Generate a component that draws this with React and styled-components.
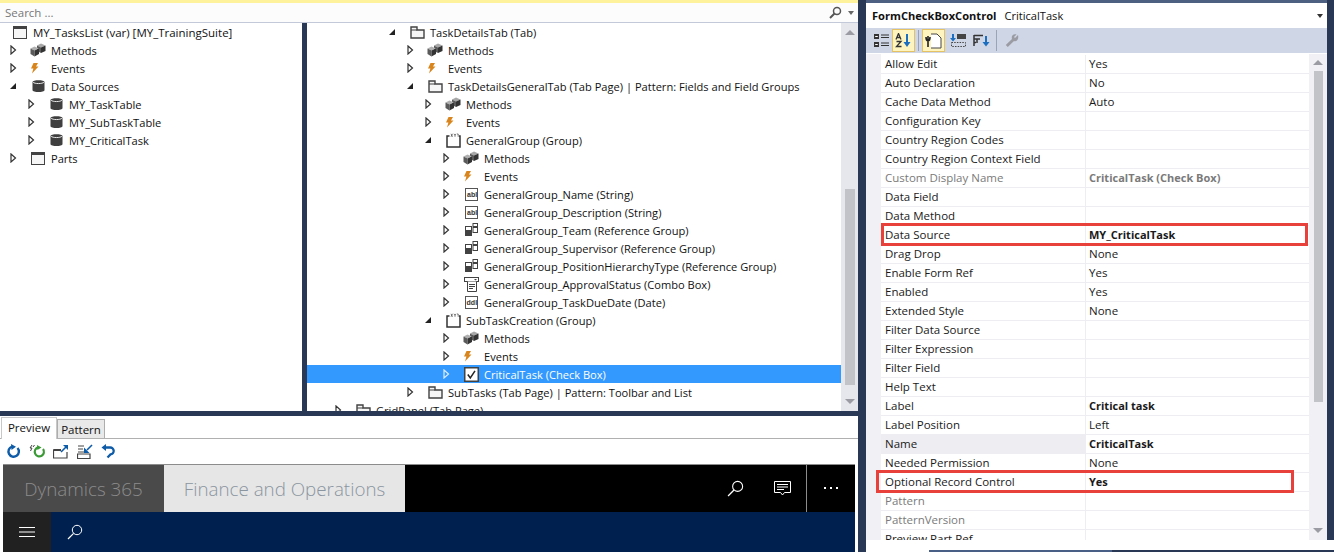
import styled, { createGlobalStyle } from "styled-components";

const GlobalStyle = createGlobalStyle`
    html, body { margin: 0; padding: 0; background: #293955; overflow: hidden; }
    * { box-sizing: border-box; }
`

const UI_FONT = `"Open Sans", "Noto Sans", sans-serif`

const Screen = styled.div`
    display: flex;
    width: 1334px;
    height: 552px;
    background: #293955;
    font-family: ${UI_FONT};
    font-size: 11.5px;
    color: #111;
    overflow: hidden;
`

const Designer = styled.div`
    display: flex;
    flex-direction: column;
    width: 858px;
    flex: none;
`

const TopStrip = styled.div`
    height: 3px;
    background: #fff29d;
`

const SearchBar = styled.div`
    display: flex;
    align-items: center;
    justify-content: space-between;
    height: 20px;
    padding: 0 4px 0 5px;
    background: #fcfcfc;
    border-bottom: 1px solid #c3c9d8;
    color: #777;
`

const SearchTools = styled.div`
    display: flex;
    align-items: center;
    gap: 6px;
`

const Trees = styled.div`
    display: flex;
    height: 388px;
    flex: none;
`

const LeftTree = styled.div`
    width: 302px;
    background: #fff;
    overflow: hidden;
`

const VSplit = styled.div`
    width: 5px;
    background: #293955;
`

const RightTree = styled.div`
    display: flex;
    width: 551px;
    background: #fff;
`

const TreeBody = styled.div`
    width: 534px;
    overflow: hidden;
`

const TreeRow = styled.div`
    display: flex;
    align-items: center;
    height: 18px;
    padding-left: ${p => p.$indent}px;
    background: ${p => (p.$selected ? "#3399ff" : "transparent")};
    color: ${p => (p.$selected ? "#fff" : "inherit")};
    font-size: 11.1px;
    white-space: nowrap;
`

const Toggle = styled.span`
    display: flex;
    justify-content: center;
    width: 18px;
    flex: none;
`

const NodeIcon = styled.span`
    display: flex;
    justify-content: center;
    width: 18px;
    margin: 0 4px 0 7px;
    flex: none;
`

const RootRow = styled(TreeRow)`
    font-size: 11.5px;
`

const RootIcon = styled(NodeIcon)`
    margin-left: 0;
`

const TreeScroll = styled.div`
    display: flex;
    flex-direction: column;
    align-items: center;
    width: 17px;
    background: #e6e7ec;
    padding-top: 7px;
`

const TreeThumb = styled.div`
    width: 10px;
    height: 196px;
    margin-top: 154px;
    background: #c2c3c9;
`

const ScrollArrow = styled.span`
    margin-top: ${p => p.$gap}px;
    width: 0;
    height: 0;
    flex: none;
    border-left: 5px solid transparent;
    border-right: 5px solid transparent;
    ${p => (p.$up ? "border-bottom" : "border-top")}: 5px solid #9a9ba3;
`

const HSplit = styled.div`
    height: 5px;
    background: #293955;
    flex: none;
`

const PreviewPane = styled.div`
    display: flex;
    flex-direction: column;
    flex: 1;
    background: #fff;
`

const TabStrip = styled.div`
    display: flex;
    align-items: flex-end;
    height: 23px;
    padding: 1px 0 0 1px;
    border-bottom: 1px solid #b0b0b0;
`

const Tab = styled.div`
    display: flex;
    align-items: center;
    justify-content: center;
    width: ${p => p.$width}px;
    height: ${p => (p.$active ? 22 : 19)}px;
    margin-bottom: ${p => (p.$active ? -1 : 0)}px;
    padding-bottom: ${p => (p.$active ? 2 : 0)}px;
    background: ${p => (p.$active ? "#fff" : "#e9e9e9")};
    border: 1px solid ${p => (p.$active ? "#c8c8c8" : "#adadad")};
    border-bottom: none;
    color: #111;
`

const PreviewTools = styled.div`
    display: flex;
    align-items: center;
    gap: 7.5px;
    height: 25px;
    padding-left: 6px;
`

const AppFrame = styled.div`
    display: flex;
    flex-direction: column;
    flex: 1;
    margin: 0 3px;
`

const AppHeader = styled.div`
    display: flex;
    height: 48px;
    background: #000;
    border-top: 1px solid #8c8c8c;
`

const AppBrand = styled.div`
    display: flex;
    align-items: center;
    justify-content: center;
    width: ${p => p.$width}px;
    background: ${p => p.$bg};
    color: ${p => p.$color};
    font-size: 18.8px;
    font-weight: 300;
    white-space: nowrap;
`

const AppActions = styled.div`
    display: flex;
    flex: 1;
    justify-content: flex-end;
    align-items: stretch;
`

const AppAction = styled.div`
    display: flex;
    align-items: center;
    justify-content: center;
    width: ${p => p.$width}px;
    border-left: ${p => (p.$divided ? "1px solid #8c8c8c" : "none")};
`

const AppNav = styled.div`
    display: flex;
    align-items: center;
    flex: 1;
    background: #002050;
`

const Burger = styled.div`
    display: flex;
    align-items: center;
    justify-content: center;
    width: 48px;
    height: 100%;
    background: #212121;
`

const NavSearch = styled.div`
    display: flex;
    padding-left: 16px;
`

const PropertiesSide = styled.div`
    display: flex;
    flex-direction: column;
    width: 468px;
    margin-left: 8px;
    flex: none;
`

const PropertiesArea = styled.div`
    display: flex;
    height: 540px;
    flex: none;
`

const Properties = styled.div`
    display: flex;
    flex-direction: column;
    width: 461px;
    background: #fff;
`

const PropTopEdge = styled.div`
    height: 3px;
    background: #4d6082;
    flex: none;
`

const PropTitle = styled.div`
    display: flex;
    align-items: center;
    justify-content: space-between;
    height: 25px;
    padding: 0 4px 0 6px;
    background: #fff;
    font-size: 11.1px;
`

const TitleName = styled.b`
    font-weight: 700;
    margin-right: 8px;
`

const PropToolbar = styled.div`
    display: flex;
    align-items: center;
    height: 25px;
    margin-bottom: 1px;
    padding-left: 5px;
    background: #cfd6e5;
`

const ToolButton = styled.span`
    display: flex;
    align-items: center;
    justify-content: center;
    width: ${p => p.$width || 23}px;
    height: 23px;
    margin-right: ${p => p.$right || 0}px;
    background: ${p => (p.$active ? "#fdf4bf" : "transparent")};
    border: 1px solid ${p => (p.$active ? "#e5c365" : "transparent")};
`

const ToolSeparator = styled.span`
    width: 1px;
    height: 21px;
    margin: 0 3px;
    background: #9aa3b8;
`

const PropBody = styled.div`
    position: relative;
    display: flex;
    flex: 1;
    min-height: 0;
`

const Gutter = styled.div`
    width: 15px;
    background: #f0f0f5;
    flex: none;
`

const PropRows = styled.div`
    width: 428px;
    padding-top: 1px;
    overflow: hidden;
`

const PropRow = styled.div`
    display: grid;
    grid-template-columns: 205px 1fr;
    height: 19px;
    border-bottom: 1px solid #eeeef2;
    white-space: nowrap;
`

const PropName = styled.div`
    padding-left: 4px;
    line-height: 18px;
    color: ${p => (p.$muted ? "#7a7a7a" : "#1a1a1a")};
    background: ${p => (p.$current ? "#eeeef2" : "transparent")};
    border-right: 1px solid #eeeef2;
`

const PropValue = styled.div`
    padding-left: 3px;
    line-height: 18px;
    font-size: ${p => (p.$bold ? 11 : 11.5)}px;
    font-weight: ${p => (p.$bold ? 700 : 400)};
    color: ${p => (p.$muted ? "#7a7a7a" : "#1a1a1a")};
`

const PropScroll = styled.div`
    display: flex;
    flex-direction: column;
    align-items: center;
    width: 18px;
    padding-top: 6px;
    background: #f0f0f5;
`

const PropThumb = styled.div`
    width: 9px;
    height: 331px;
    margin-top: 6px;
    flex: none;
    background: #c2c3c9;
`

const Callout = styled.div`
    position: absolute;
    left: ${p => p.$left}px;
    top: ${p => p.$top}px;
    width: ${p => p.$width}px;
    height: 23px;
    border: 3px solid #e8403a;
    pointer-events: none;
`

const BottomBand = styled.div`
    display: flex;
    flex-direction: column;
    justify-content: flex-end;
    flex: 1;
    background: #fff;
`

const BottomEdge = styled.div`
    height: 2px;
    margin-left: 63px;
    background: linear-gradient(to right, #4a5f85 183px, #293955 183px);
`

const TinyLabel = styled.text`
    font-family: "Liberation Sans", sans-serif;
    font-size: 7px;
    font-weight: 700;
    fill: #333;
`

function Arrow({ open, light }) {
    return open ? (
        <svg width="8" height="8" viewBox="0 0 8 8"><path d="M1 7 L7 7 L7 1 Z" fill="#222" /></svg>
    ) : (
        <svg width="8" height="10" viewBox="0 0 8 10">
            <path d="M2 1 L6.5 5 L2 9 Z" fill={light ? "#3399ff" : "#fff"} stroke={light ? "#dcecff" : "#333"} strokeWidth="1.2" />
        </svg>
    )
}

const icons = {
    methods: (
        <svg width="16" height="14" viewBox="0 0 16 14">
            <path d="M7 2.5 L11 0.5 L15.5 2.5 L11 4.5 Z" fill="#a8a8a8" />
            <path d="M7 2.5 L11 4.5 V10 L7 8 Z" fill="#5a5a5a" />
            <path d="M15.5 2.5 L11 4.5 V10 L15.5 8 Z" fill="#333" />
            <path d="M0.5 5.5 L4.5 3.5 L9 5.5 L4.5 7.5 Z" fill="#b0b0b0" />
            <path d="M0.5 5.5 L4.5 7.5 V13.5 L0.5 11 Z" fill="#5a5a5a" />
            <path d="M9 5.5 L4.5 7.5 V13.5 L9 11 Z" fill="#333" />
        </svg>
    ),
    events: (
        <svg width="16" height="11" viewBox="0 0 16 11">
            <path d="M3.5 0 H8 L6 3.5 H8.5 L2 10.5 L3.4 5.5 H1 Z" fill="#d9851e" />
        </svg>
    ),
    database: (
        <svg width="13" height="14" viewBox="0 0 13 14">
            <path d="M0.5 3 C0.5 0.5 12.5 0.5 12.5 3 V11 C12.5 13.7 0.5 13.7 0.5 11 Z" fill="#3f3f3f" />
            <path d="M1 3.2 C2.5 5 10.5 5 12 3.2" fill="none" stroke="#e8e8e8" strokeWidth="1" />
        </svg>
    ),
    window: (
        <svg width="14" height="13" viewBox="0 0 14 13">
            <rect x="0.5" y="0.5" width="13" height="12" fill="#f6f6f6" stroke="#424242" />
            <rect x="1" y="1" width="12" height="2" fill="#424242" />
        </svg>
    ),
    tab: (
        <svg width="15" height="13" viewBox="0 0 15 13">
            <path d="M1 12 V1 H7 V4 H14 V12 Z" fill="#f6f6f6" stroke="#424242" strokeWidth="1.4" />
            <path d="M7 4 H1" stroke="#424242" strokeWidth="1" />
        </svg>
    ),
    group: (
        <svg width="15" height="15" viewBox="0 0 15 15">
            <path d="M3.5 3 H1 V14 H14 V3 H13" fill="#fff" stroke="#333" strokeWidth="1.5" />
            <path d="M5 0.8 L6.5 3.8 M6.5 0.8 L5 3.8 M8 0.8 L9 2.4 L10 0.8 M9 2.4 V3.8 M11 1 L12.2 1 M12.2 1 V3.8" stroke="#444" strokeWidth="0.7" fill="none" />
        </svg>
    ),
    string: (
        <svg width="13" height="13" viewBox="0 0 13 13">
            <rect x="0.5" y="0.5" width="12" height="12" fill="#fff" stroke="#555" />
            <TinyLabel x="2" y="9">abl</TinyLabel>
        </svg>
    ),
    reference: (
        <svg width="13" height="14" viewBox="0 0 13 14">
            <rect x="0.5" y="3.5" width="6" height="9" fill="#fff" stroke="#424242" />
            <rect x="1" y="7" width="5" height="5" fill="#424242" />
            <rect x="8" y="0.5" width="4.5" height="9" fill="#fff" stroke="#424242" />
            <rect x="8" y="3" width="4.5" height="2" fill="#424242" />
        </svg>
    ),
    combo: (
        <svg width="15" height="15" viewBox="0 0 15 15">
            <rect x="0.5" y="0.5" width="14" height="4" fill="#fff" stroke="#424242" />
            <path d="M10 2 H13 L11.5 3.6 Z" fill="#424242" />
            <path d="M3.5 4.5 V14.5 H12.5 V4.5" fill="#fff" stroke="#424242" />
            <path d="M5 7.5 H11 M5 9.5 H11 M5 11.5 H9" stroke="#424242" />
        </svg>
    ),
    date: (
        <svg width="13" height="13" viewBox="0 0 13 13">
            <rect x="0.5" y="0.5" width="12" height="12" fill="#fff" stroke="#555" />
            <TinyLabel x="1.6" y="9">ddl</TinyLabel>
        </svg>
    ),
    check: (
        <svg width="15" height="15" viewBox="0 0 15 15">
            <rect x="0.75" y="0.75" width="13.5" height="13.5" fill="#fff" stroke="#424242" strokeWidth="1.5" />
            <path d="M3.8 7.5 L6.3 11 L11 3.8" fill="none" stroke="#222" strokeWidth="1.5" />
        </svg>
    ),
}

const leftTree = [
    { indent: 4, arrow: "closed", icon: "methods", text: "Methods" },
    { indent: 4, arrow: "closed", icon: "events", text: "Events" },
    { indent: 4, arrow: "open", icon: "database", text: "Data Sources" },
    { indent: 22, arrow: "closed", icon: "database", text: "MY_TaskTable" },
    { indent: 22, arrow: "closed", icon: "database", text: "MY_SubTaskTable" },
    { indent: 22, arrow: "closed", icon: "database", text: "MY_CriticalTask" },
    { indent: 4, arrow: "closed", icon: "window", text: "Parts" },
]

const rightTree = [
    { indent: 76, arrow: "open", icon: "tab", text: "TaskDetailsTab (Tab)" },
    { indent: 94, arrow: "closed", icon: "methods", text: "Methods" },
    { indent: 94, arrow: "closed", icon: "events", text: "Events" },
    { indent: 94, arrow: "open", icon: "tab", text: "TaskDetailsGeneralTab (Tab Page) | Pattern: Fields and Field Groups" },
    { indent: 112, arrow: "closed", icon: "methods", text: "Methods" },
    { indent: 112, arrow: "closed", icon: "events", text: "Events" },
    { indent: 112, arrow: "open", icon: "group", text: "GeneralGroup (Group)" },
    { indent: 130, arrow: "closed", icon: "methods", text: "Methods" },
    { indent: 130, arrow: "closed", icon: "events", text: "Events" },
    { indent: 130, arrow: "closed", icon: "string", text: "GeneralGroup_Name (String)" },
    { indent: 130, arrow: "closed", icon: "string", text: "GeneralGroup_Description (String)" },
    { indent: 130, arrow: "closed", icon: "reference", text: "GeneralGroup_Team (Reference Group)" },
    { indent: 130, arrow: "closed", icon: "reference", text: "GeneralGroup_Supervisor (Reference Group)" },
    { indent: 130, arrow: "closed", icon: "reference", text: "GeneralGroup_PositionHierarchyType (Reference Group)" },
    { indent: 130, arrow: "closed", icon: "combo", text: "GeneralGroup_ApprovalStatus (Combo Box)" },
    { indent: 130, arrow: "closed", icon: "date", text: "GeneralGroup_TaskDueDate (Date)" },
    { indent: 112, arrow: "open", icon: "group", text: "SubTaskCreation (Group)" },
    { indent: 130, arrow: "closed", icon: "methods", text: "Methods" },
    { indent: 130, arrow: "closed", icon: "events", text: "Events" },
    { indent: 130, arrow: "closed", icon: "check", text: "CriticalTask (Check Box)", selected: true },
    { indent: 94, arrow: "closed", icon: "tab", text: "SubTasks (Tab Page) | Pattern: Toolbar and List" },
    { indent: 22, arrow: "closed", icon: "tab", text: "GridPanel (Tab Page)" },
]

const properties = [
    { name: "Allow Edit", value: "Yes" },
    { name: "Auto Declaration", value: "No" },
    { name: "Cache Data Method", value: "Auto" },
    { name: "Configuration Key" },
    { name: "Country Region Codes" },
    { name: "Country Region Context Field" },
    { name: "Custom Display Name", value: "CriticalTask (Check Box)", bold: true, muted: true },
    { name: "Data Field" },
    { name: "Data Method" },
    { name: "Data Source", value: "MY_CriticalTask", bold: true },
    { name: "Drag Drop", value: "None" },
    { name: "Enable Form Ref", value: "Yes" },
    { name: "Enabled", value: "Yes" },
    { name: "Extended Style", value: "None" },
    { name: "Filter Data Source" },
    { name: "Filter Expression" },
    { name: "Filter Field" },
    { name: "Help Text" },
    { name: "Label", value: "Critical task", bold: true },
    { name: "Label Position", value: "Left" },
    { name: "Name", value: "CriticalTask", bold: true, current: true },
    { name: "Needed Permission", value: "None" },
    { name: "Optional Record Control", value: "Yes", bold: true },
    { name: "Pattern", muted: true },
    { name: "PatternVersion", muted: true },
    { name: "Preview Part Ref" },
]

function Magnifier({ size = 16, color = "#fff" }) {
    return (
        <svg width={size} height={size} viewBox="0 0 16 16">
            <circle cx="10" cy="6" r="4.7" fill="none" stroke={color} strokeWidth="1" />
            <path d="M6.6 9.4 L1 15" stroke={color} strokeWidth="1.2" />
        </svg>
    )
}

function Tree({ rows }) {
    return rows.map((row, i) => (
        <TreeRow key={i} $indent={row.indent} $selected={row.selected}>
            <Toggle><Arrow open={row.arrow === "open"} light={row.selected} /></Toggle>
            <NodeIcon>{icons[row.icon]}</NodeIcon>
            {row.text}
        </TreeRow>
    ))
}

export default function App() {
    return (
        <Screen>
            <GlobalStyle />
            <Designer>
                <TopStrip />
                <SearchBar>
                    Search ...
                    <SearchTools>
                        <svg width="13" height="13" viewBox="0 0 13 13">
                            <circle cx="8" cy="5" r="3.5" fill="none" stroke="#555" strokeWidth="1.5" />
                            <path d="M5.5 7.5 L1 12" stroke="#555" strokeWidth="2" />
                        </svg>
                        <svg width="6" height="4" viewBox="0 0 6 4"><path d="M0 0 H6 L3 4 Z" fill="#666" /></svg>
                    </SearchTools>
                </SearchBar>
                <Trees>
                    <LeftTree>
                        <RootRow $indent={11}>
                            <RootIcon>{icons.window}</RootIcon>
                            MY_TasksList (var) [MY_TrainingSuite]
                        </RootRow>
                        <Tree rows={leftTree} />
                    </LeftTree>
                    <VSplit />
                    <RightTree>
                        <TreeBody>
                            <Tree rows={rightTree} />
                        </TreeBody>
                        <TreeScroll>
                            <ScrollArrow $up $gap={0} />
                            <TreeThumb />
                            <ScrollArrow $gap={14} />
                        </TreeScroll>
                    </RightTree>
                </Trees>
                <HSplit />
                <PreviewPane>
                    <TabStrip>
                        <Tab $active $width={56}>Preview</Tab>
                        <Tab $width={48}>Pattern</Tab>
                    </TabStrip>
                    <PreviewTools>
                        <svg width="15" height="15" viewBox="0 0 15 15">
                            <path d="M11.5 4 A5.2 5.2 0 1 1 6 2.6" fill="none" stroke="#0e5ca8" strokeWidth="2.4" />
                            <path d="M5 0 L10 2.8 L5.5 6 Z" fill="#0e5ca8" />
                        </svg>
                        <svg width="17" height="15" viewBox="0 0 17 15">
                            <path d="M14 5 A4.6 4.6 0 1 1 9 3.4" fill="none" stroke="#3a9a35" strokeWidth="2.2" />
                            <path d="M8 1 L12.5 3.4 L8.4 6 Z" fill="#3a9a35" />
                            <path d="M3 1 L1 4 H3 L1.5 7 M5.5 1 L4 3" fill="none" stroke="#444" strokeWidth="1" />
                        </svg>
                        <svg width="16" height="15" viewBox="0 0 16 15">
                            <path d="M0.5 5.5 H8 M0.5 5.5 V14 H14 V8" fill="none" stroke="#444" strokeWidth="1.2" />
                            <path d="M1 5 H8 V7 H1 Z" fill="#444" />
                            <path d="M8 8 L13 3" stroke="#0e5ca8" strokeWidth="1.6" />
                            <path d="M10 1 H15 V6 Z" fill="#0e5ca8" />
                        </svg>
                        <svg width="17" height="15" viewBox="0 0 17 15">
                            <path d="M0.5 10 H13 V14.5 H0.5 Z" fill="none" stroke="#444" strokeWidth="1.2" />
                            <path d="M1 2 H7 M1 5 H6 M1 8 H8" stroke="#444" strokeWidth="1" />
                            <path d="M15 1 L10 6" stroke="#0e5ca8" strokeWidth="1.6" />
                            <path d="M7 3.5 V9 H12.5 Z" fill="#0e5ca8" />
                        </svg>
                        <svg width="15" height="15" viewBox="0 0 15 15">
                            <path d="M3.5 3.5 H9 A3.4 3.4 0 0 1 9.5 10.4 L6.5 13.5" fill="none" stroke="#0e5ca8" strokeWidth="2.3" />
                            <path d="M5 0 V7 L0.5 3.5 Z" fill="#0e5ca8" />
                        </svg>
                    </PreviewTools>
                    <AppFrame>
                        <AppHeader>
                            <AppBrand $width={161} $bg="#4a4a4a" $color="#8c8c8c">Dynamics 365</AppBrand>
                            <AppBrand $width={241} $bg="#e6e6e6" $color="#8a95a0">Finance and Operations</AppBrand>
                            <AppActions>
                                <AppAction $width={47}><Magnifier size={17} /></AppAction>
                                <AppAction $width={47}>
                                    <svg width="17" height="15" viewBox="0 0 17 15">
                                        <path d="M0.5 0.5 H16.5 V11.5 H10.5 L8.5 14 L6.5 11.5 H0.5 Z" fill="none" stroke="#fff" />
                                        <path d="M3 3.5 H14 M3 6 H14 M3 8.5 H10" stroke="#fff" />
                                    </svg>
                                </AppAction>
                                <AppAction $width={49} $divided>
                                    <svg width="15" height="3" viewBox="0 0 15 3">
                                        <path d="M0 0 H2 V2 H0 Z M6 0 H8 V2 H6 Z M12 0 H14 V2 H12 Z" fill="#fff" />
                                    </svg>
                                </AppAction>
                            </AppActions>
                        </AppHeader>
                        <AppNav>
                            <Burger>
                                <svg width="16" height="10" viewBox="0 0 16 10">
                                    <path d="M0 .5 H16 M0 5 H16 M0 9.5 H16" stroke="#fff" />
                                </svg>
                            </Burger>
                            <NavSearch><Magnifier size={16} /></NavSearch>
                        </AppNav>
                    </AppFrame>
                </PreviewPane>
            </Designer>
            <PropertiesSide>
                <PropertiesArea>
                    <Properties>
                        <PropTopEdge />
                        <PropTitle>
                            <span><TitleName>FormCheckBoxControl</TitleName>CriticalTask</span>
                            <svg width="6" height="4" viewBox="0 0 6 4"><path d="M0 0 H6 L3 4 Z" fill="#333" /></svg>
                        </PropTitle>
                        <PropToolbar>
                            <ToolButton $width={21}>
                                <svg width="16" height="14" viewBox="0 0 16 14">
                                    <path d="M0 0 H5 V5 H0 Z M0 8 H5 V13 H0 Z" fill="#333" />
                                    <path d="M1.2 2.5 H3.8 M1.2 10.5 H3.8" stroke="#fff" />
                                    <path d="M7 1 H15 M7 3.5 H15 M7 9 H15 M7 11.5 H15" stroke="#333" />
                                </svg>
                            </ToolButton>
                            <ToolButton $active $width={23}>
                                <svg width="17" height="15" viewBox="0 0 17 15">
                                    <path d="M1 6.5 L3.5 0.5 L6 6.5 M2 4.5 H5 M1.5 8.5 H6 L1.5 13.5 H6.5" fill="none" stroke="#333" strokeWidth="1.3" />
                                    <path d="M12 1 V12" stroke="#1c6fc0" strokeWidth="2" />
                                    <path d="M8.5 9 H15.5 L12 14 Z" fill="#1c6fc0" />
                                </svg>
                            </ToolButton>
                            <ToolSeparator />
                            <ToolButton $active $width={23} $right={2}>
                                <svg width="17" height="16" viewBox="0 0 17 16">
                                    <path d="M6 1 H12 L16 5 V15 H6" fill="#fff" stroke="#444" />
                                    <path d="M3 3 V7 M1 4 C1 9 5 9 5 4 M3 8 V14" fill="none" stroke="#222" strokeWidth="1.6" />
                                </svg>
                            </ToolButton>
                            <ToolButton $width={23}>
                                <svg width="17" height="15" viewBox="0 0 17 15">
                                    <rect x="7" y="1" width="9" height="5" fill="#444" />
                                    <path d="M3 1 V6" stroke="#1c6fc0" strokeWidth="2" />
                                    <path d="M0 5 H6 L3 8.5 Z" fill="#1c6fc0" />
                                    <rect x="1.5" y="9.5" width="14" height="4" fill="none" stroke="#444" strokeDasharray="1.5 1.2" />
                                </svg>
                            </ToolButton>
                            <ToolButton $width={23}>
                                <svg width="17" height="14" viewBox="0 0 17 14">
                                    <path d="M1 1.5 H10 M1 5 H7 M1 8.5 H3 M1 1 V12 M4 5 V9" fill="none" stroke="#333" strokeWidth="1.5" />
                                    <path d="M13 2 V9" stroke="#1c6fc0" strokeWidth="2" />
                                    <path d="M9.5 8 H16.5 L13 12.5 Z" fill="#1c6fc0" />
                                </svg>
                            </ToolButton>
                            <ToolSeparator />
                            <ToolButton $width={24}>
                                <svg width="14" height="14" viewBox="0 0 14 14">
                                    <path d="M13 1 L10 4 L9 3 L11.5 0.5 C8 -0.5 6 2 7 5 L0.8 11 L2.8 13 L9 7 C12 8 14 5 13 1 Z" fill="#9a9ba3" />
                                </svg>
                            </ToolButton>
                        </PropToolbar>
                        <PropBody>
                            <Gutter />
                            <PropRows>
                                {properties.map(prop => (
                                    <PropRow key={prop.name}>
                                        <PropName $muted={prop.muted} $current={prop.current}>{prop.name}</PropName>
                                        <PropValue $bold={prop.bold} $muted={prop.muted}>{prop.value}</PropValue>
                                    </PropRow>
                                ))}
                            </PropRows>
                            <PropScroll>
                                <ScrollArrow $up $gap={0} />
                                <PropThumb />
                                <ScrollArrow $gap={126} />
                            </PropScroll>
                            <Callout $left={15} $top={169} $width={427} />
                            <Callout $left={10} $top={416} $width={418} />
                        </PropBody>
                    </Properties>
                </PropertiesArea>
                <BottomBand>
                    <BottomEdge />
                </BottomBand>
            </PropertiesSide>
        </Screen>
    )
}
